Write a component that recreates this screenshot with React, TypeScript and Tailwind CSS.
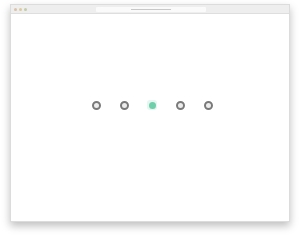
import React from 'react';

const Dot = ({ active = false }: { active?: boolean }) =>
  active ? (
    <div className="w-[10px] h-[10px] rounded-[3px] bg-[#e6f6f0] flex items-center justify-center">
      <div className="w-[7px] h-[7px] rounded-full bg-[#6fcfaa]" />
    </div>
  ) : (
    <div className="w-[10px] h-[10px] flex items-center justify-center">
      <div className="w-[9px] h-[9px] rounded-full border-[2px] border-[#7a7a7a] bg-[#ededed]" />
    </div>
  );

export default function App() {
  return (
    <div className="w-[300px] h-[237px] bg-white pt-[4px] px-[10px]" style={{ fontFamily: '"Liberation Sans", sans-serif' }}>
      <div className="w-[280px] h-[218px] flex flex-col bg-white border border-[#dcdcdc] shadow-[0_4px_8px_rgba(0,0,0,0.25)]">
        {/* title bar */}
        <div className="h-[9px] bg-[#eeeeee] border-b border-[#dedede] flex items-center px-[3px]">
          <div className="flex gap-[2px]">
            <div className="w-[3px] h-[3px] rounded-full bg-[#d9c2a8]" />
            <div className="w-[3px] h-[3px] rounded-full bg-[#dccb9e]" />
            <div className="w-[3px] h-[3px] rounded-full bg-[#c4cca8]" />
          </div>
          <div className="flex-1 flex justify-center">
            <div className="w-[110px] h-[5px] bg-[#fafafa] rounded-[1px] flex items-center justify-center">
              <div className="w-[40px] h-[1px] bg-[#c8c8c8]" />
            </div>
          </div>
          <div className="w-[11px]" />
        </div>
        {/* body */}
        <div className="flex-1 flex justify-center items-start pt-[86px] pl-[4px]">
          <div className="flex gap-[18px]">
            <Dot />
            <Dot />
            <Dot active />
            <Dot />
            <Dot />
          </div>
        </div>
      </div>
    </div>
  );
}
